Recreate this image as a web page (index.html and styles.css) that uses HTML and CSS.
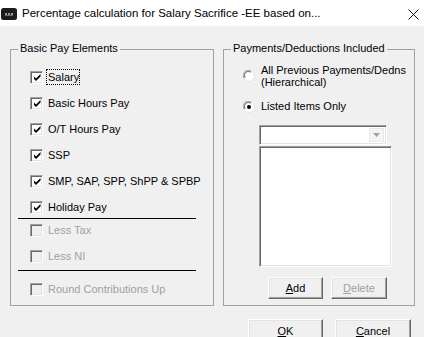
FILE: index.html
```html
<!DOCTYPE html>
<html>
<head>
<meta charset="utf-8">
<link rel="stylesheet" href="styles.css">
</head>
<body>
<div class="window">
  <div class="titlebar">
    <span class="app-icon">
      <svg width="16" height="12" viewBox="0 0 16 12"><rect x="0" y="0" width="16" height="12" rx="2.5" fill="#1c1c1c"/><rect x="4" y="5" width="2" height="2" fill="#9a9a9a"/><rect x="7" y="5" width="2" height="2" fill="#9a9a9a"/><rect x="10" y="5" width="2" height="2" fill="#9a9a9a"/><rect x="4" y="7" width="8" height="1" fill="#6a6a6a"/></svg>
    </span>
    <span class="title">Percentage calculation for Salary Sacrifice -EE based on...</span>
    <span class="close">
      <svg width="11" height="11" viewBox="0 0 11 11"><path d="M0.5 0.5 L10.5 10.5 M10.5 0.5 L0.5 10.5" stroke="#111" stroke-width="1" fill="none"/></svg>
    </span>
  </div>
  <div class="client">
    <div class="groups">
      <div class="group group-left">
        <div class="legend">Basic Pay Elements</div>
        <div class="checks">
          <div class="check"><span class="box"><svg width="9" height="9" viewBox="0 0 9 9"><path d="M1 3.5 L3 5.5 L7.5 1 L7.5 3.5 L3 8 L1 6 Z" fill="#000"/></svg></span><span class="label focus">Salary</span></div>
          <div class="check"><span class="box"><svg width="9" height="9" viewBox="0 0 9 9"><path d="M1 3.5 L3 5.5 L7.5 1 L7.5 3.5 L3 8 L1 6 Z" fill="#000"/></svg></span><span class="label">Basic Hours Pay</span></div>
          <div class="check"><span class="box"><svg width="9" height="9" viewBox="0 0 9 9"><path d="M1 3.5 L3 5.5 L7.5 1 L7.5 3.5 L3 8 L1 6 Z" fill="#000"/></svg></span><span class="label">O/T Hours Pay</span></div>
          <div class="check"><span class="box"><svg width="9" height="9" viewBox="0 0 9 9"><path d="M1 3.5 L3 5.5 L7.5 1 L7.5 3.5 L3 8 L1 6 Z" fill="#000"/></svg></span><span class="label">SSP</span></div>
          <div class="check"><span class="box"><svg width="9" height="9" viewBox="0 0 9 9"><path d="M1 3.5 L3 5.5 L7.5 1 L7.5 3.5 L3 8 L1 6 Z" fill="#000"/></svg></span><span class="label">SMP, SAP, SPP, ShPP &amp; SPBP</span></div>
          <div class="check"><span class="box"><svg width="9" height="9" viewBox="0 0 9 9"><path d="M1 3.5 L3 5.5 L7.5 1 L7.5 3.5 L3 8 L1 6 Z" fill="#000"/></svg></span><span class="label">Holiday Pay</span></div>
        </div>
        <div class="sep"></div>
        <div class="checks checks-tax">
          <div class="check disabled"><span class="box"></span><span class="label">Less Tax</span></div>
          <div class="check disabled"><span class="box"></span><span class="label">Less NI</span></div>
        </div>
        <div class="sep sep-2"></div>
        <div class="checks checks-round">
          <div class="check disabled"><span class="box"></span><span class="label">Round Contributions Up</span></div>
        </div>
      </div>
      <div class="group group-right">
        <div class="legend">Payments/Deductions Included</div>
        <div class="radio radio-first">
          <span class="radio-dot"><svg width="12" height="12" viewBox="0 0 12 12"><circle cx="6" cy="6" r="5.5" fill="#fff" stroke="#e3e3e3"/><path d="M1.2 8.2 A5 5 0 0 1 8.2 1.2" stroke="#a0a0a0" fill="none"/><path d="M2.2 7.8 A4 4 0 0 1 7.8 2.2" stroke="#696969" fill="none"/></svg></span>
          <span class="radio-text">All Previous Payments/Dedns<br>(Hierarchical)</span>
        </div>
        <div class="radio radio-second">
          <span class="radio-dot"><svg width="12" height="12" viewBox="0 0 12 12"><circle cx="6" cy="6" r="5.5" fill="#fff" stroke="#e3e3e3"/><path d="M1.2 8.2 A5 5 0 0 1 8.2 1.2" stroke="#a0a0a0" fill="none"/><path d="M2.2 7.8 A4 4 0 0 1 7.8 2.2" stroke="#696969" fill="none"/><circle cx="6" cy="6" r="2" fill="#000"/></svg></span>
          <span class="radio-text">Listed Items Only</span>
        </div>
        <div class="combo">
          <span class="combo-field"></span>
          <span class="combo-btn"><svg width="7" height="4" viewBox="0 0 7 4"><path d="M0 0 H7 L3.5 4 Z" fill="#a0a0a0"/></svg></span>
        </div>
        <div class="listbox"></div>
        <div class="group-buttons">
          <button class="btn btn-add"><u>A</u>dd</button>
          <button class="btn btn-delete" disabled><u>D</u>elete</button>
        </div>
      </div>
    </div>
    <div class="dialog-buttons">
      <button class="btn btn-ok"><u>O</u>K</button>
      <button class="btn btn-cancel"><u>C</u>ancel</button>
    </div>
  </div>
</div>
</body>
</html>
```

FILE: styles.css
```css
html, body {
  margin: 0;
  padding: 0;
}
body {
  width: 424px;
  height: 337px;
  overflow: hidden;
  background: #f0f0f0;
  font-family: "Liberation Sans", Arial, sans-serif;
  font-size: 11px;
  color: #000;
}
.window {
  width: 424px;
  height: 337px;
  overflow: hidden;
}
.titlebar {
  height: 26px;
  background: #fff;
  display: flex;
  align-items: center;
}
.app-icon {
  display: flex;
  margin-left: 1px;
  margin-top: 1px;
}
.title {
  margin-left: 5px;
  font-family: "Liberation Sans", Arial, sans-serif;
  font-size: 11.5px;
  color: #000;
  white-space: nowrap;
}
.close {
  display: flex;
  margin-left: auto;
  margin-right: 5px;
  margin-top: 2px;
}
.client {
  padding: 23px 9px 0 10px;
}
.groups {
  display: flex;
  gap: 9px;
}
.group {
  border: 1px solid #a0a0a0;
  height: 257px;
  box-sizing: border-box;
}
.group-left {
  width: 204px;
}
.group-right {
  width: 192px;
}
.legend {
  width: fit-content;
  margin: -8px 0 0 7px;
  padding: 0 2px;
  height: 13px;
  line-height: 13px;
  background: #f0f0f0;
  white-space: nowrap;
}
.checks {
  display: flex;
  flex-direction: column;
  gap: 8px;
  padding-left: 19px;
  margin-top: 13px;
}
.checks-tax {
  margin-top: 2px;
}
.checks-round {
  margin-top: 9px;
}
.check {
  height: 18px;
  display: flex;
  align-items: center;
}
.box {
  width: 13px;
  height: 13px;
  box-sizing: border-box;
  border: 1px solid;
  border-color: #a0a0a0 #fff #fff #a0a0a0;
  box-shadow: inset 1px 1px 0 #696969, inset -1px -1px 0 #e3e3e3;
  background: #fff;
  display: flex;
  align-items: center;
  justify-content: center;
  flex: none;
}
.box svg {
  display: block;
  margin: 1px 0 0 1px;
}
.label {
  margin-left: 5px;
  line-height: 13px;
  white-space: nowrap;
}
.focus {
  display: inline-block;
  height: 14px;
  line-height: 14px;
  margin-left: 4px;
  padding: 0 0 0 1px;
  box-sizing: border-box;
  outline: 1px dotted #000;
}
.disabled .box {
  background: #f0f0f0;
}
.disabled .label {
  color: #a0a0a0;
}
.sep {
  margin: 2px 0 0 7px;
  width: 178px;
  height: 1px;
  background: #000;
}
.sep-2 {
  margin-top: 5px;
}
.radio {
  display: flex;
  align-items: center;
  padding-left: 19px;
}
.radio-first {
  margin-top: 9px;
}
.radio-second {
  margin-top: 12px;
}
.radio-dot {
  display: flex;
  flex: none;
}
.radio-text {
  margin-left: 6px;
  line-height: 12px;
  white-space: nowrap;
}
.radio-second .radio-text {
  line-height: 13px;
}
.combo {
  margin: 12px 0 0 35px;
  width: 128px;
  height: 20px;
  box-sizing: border-box;
  border: 1px solid;
  border-color: #a0a0a0 #fff #fff #a0a0a0;
  box-shadow: inset 1px 1px 0 #696969, inset -1px -1px 0 #e3e3e3;
  background: #fff;
  display: flex;
  padding: 2px;
}
.combo-field {
  flex: 1;
}
.combo-btn {
  width: 15px;
  background: #f4f4f4;
  border: 1px solid #e8e8e8;
  box-sizing: border-box;
  display: flex;
  align-items: center;
  justify-content: center;
}
.listbox {
  margin: 1px 0 0 35px;
  width: 133px;
  height: 121px;
  box-sizing: border-box;
  border: 1px solid;
  border-color: #a0a0a0 #fff #fff #a0a0a0;
  box-shadow: inset 1px 1px 0 #696969, inset -1px -1px 0 #e3e3e3;
  background: #fff;
}
.group-buttons {
  display: flex;
  margin: 10px 0 0 44px;
  gap: 8px;
}
.btn {
  font-family: "Liberation Sans", Arial, sans-serif;
  font-size: 11px;
  color: #000;
  background: #f0f0f0;
  box-sizing: border-box;
  border: 1px solid;
  border-color: #fff #696969 #696969 #fff;
  box-shadow: inset -1px -1px 0 #a0a0a0, inset 1px 1px 0 #e3e3e3;
  padding: 0;
  margin: 0;
  height: 22px;
  line-height: 18px;
}
.btn:disabled {
  color: #a0a0a0;
}
.btn-add {
  width: 55px;
}
.btn-delete {
  width: 56px;
}
.dialog-buttons {
  display: flex;
  margin: 13px 0 0 238px;
  gap: 12px;
}
.btn-ok {
  width: 75px;
  height: 23px;
}
.btn-cancel {
  width: 76px;
  height: 23px;
}
```
